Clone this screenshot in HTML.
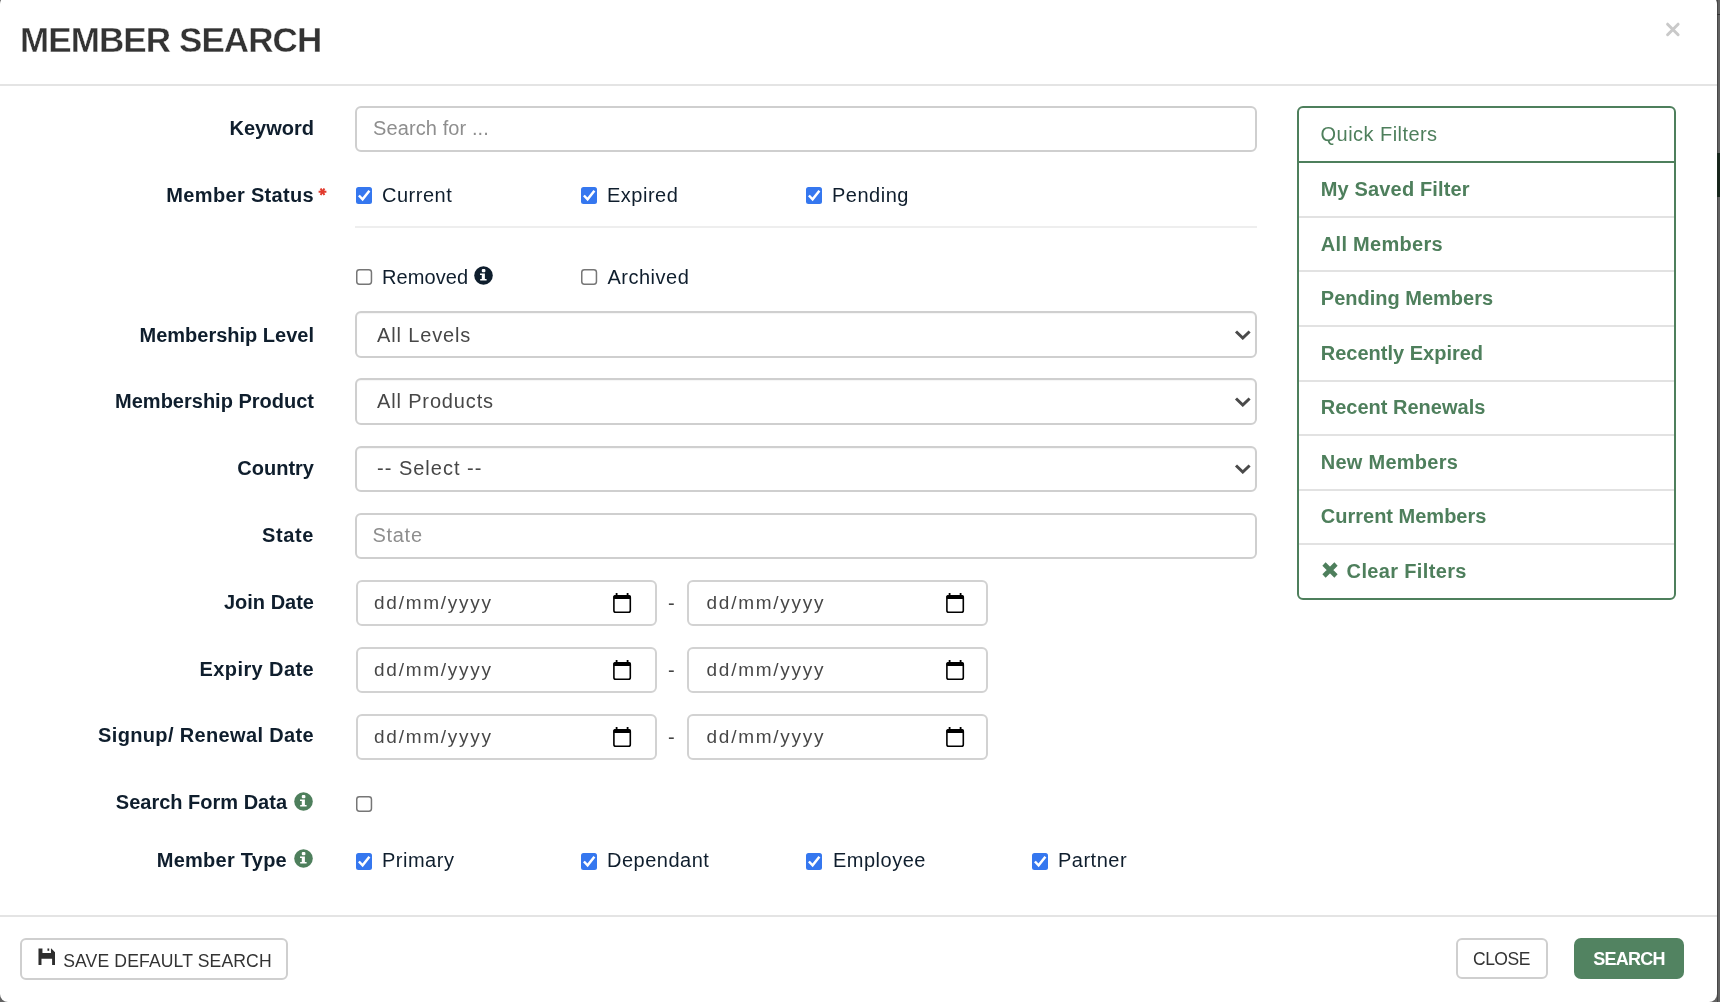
<!DOCTYPE html>
<html><head><meta charset="utf-8">
<style>
*{box-sizing:border-box;margin:0;padding:0}
html,body{width:1720px;height:1002px;overflow:hidden;background:#626262;font-family:"Liberation Sans",sans-serif}
.mbg{position:absolute;left:0;top:-4px;width:1717px;height:1006.4px;background:#fff;border-radius:8px}
.modal{position:absolute;left:0;top:0;width:1717px;height:1002px;will-change:transform}
.t{position:absolute;white-space:nowrap;line-height:normal}
.hline{position:absolute;left:0;width:1717px;height:2px;background:#e4e4e4}
.title{left:20px;top:20.3px;font-size:35px;font-weight:bold;color:#333;letter-spacing:-0.9px;-webkit-text-stroke:0.35px #fff;paint-order:fill stroke}
.lbl{font-size:20px;font-weight:bold;color:#0f1e2d;text-align:right}
.inp{position:absolute;left:355px;width:902px;height:46px;border:2px solid #cfcfcf;border-radius:6px;background:#fff}
.sel{position:absolute;left:355px;width:902px;height:47px;border:2px solid #cfcfcf;border-radius:6px;background:#fff;box-shadow:inset 0 1px 1px rgba(0,0,0,.04)}
.ph{font-size:20px;color:#8e8e8e;letter-spacing:0.1px}
.sv{font-size:20px;color:#474747;letter-spacing:0.85px}
.chev{position:absolute;left:1234px;width:18px;height:10px}
.cb{position:absolute;width:16.7px;height:16.6px;border-radius:2.5px}
.cb.on{background:#3577ef}
.cb.on svg{position:absolute;left:0;top:0}
.cb.off{background:none}
.ct{font-size:20px;color:#0f1e2d;letter-spacing:0.5px}
.date{position:absolute;width:301px;height:46px;border:2px solid #d2d2d2;border-radius:6px;background:#fff}
.dt{font-size:19px;color:#474747;letter-spacing:1.75px}
.cal{position:absolute;width:20px;height:22px}
.dash{font-size:20px;color:#444}
.qf{position:absolute;left:1297.4px;top:106.3px;width:379px;height:493.5px;border:2px solid #4e7f5c;border-radius:6px;overflow:hidden;background:#fff}
.qsep{position:absolute;left:0;width:100%;height:2px;background:#e2e2e2}
.qt{font-size:20px;color:#4e7f5c}
.qb{font-size:20px;font-weight:bold;color:#4e7f5c}
.btn{position:absolute;height:42px;border:2px solid #cfcfcf;border-radius:6px;background:#fff}
.bt{font-size:18px;color:#333}
.sbtn{position:absolute;left:1574px;top:938px;width:110px;height:41px;border-radius:7px;background:#528361}
</style></head><body>
<div style="position:absolute;left:1717px;top:0;width:1px;height:1002px;background:#474747"></div><div style="position:absolute;left:1717px;top:153px;width:3px;height:44px;background:#18261c"></div><div style="position:absolute;left:1717px;top:14px;width:3px;height:1px;background:#333"></div>
<div class="mbg"></div>
<div class="modal">
  <div class="t title">MEMBER SEARCH</div>
  <svg style="position:absolute;left:1665px;top:22px" width="16" height="16" viewBox="0 0 16 16"><path d="M2.6 2.2L13.1 12.7M13.1 2.2L2.6 12.7" stroke="#c9c9c9" stroke-width="3" stroke-linecap="round"/></svg>
  <div class="hline" style="top:83.5px"></div>

  <!-- Keyword -->
  <div class="t lbl" style="right:1403px;top:117.3px">Keyword</div>
  <div class="inp" style="top:106px"></div>
  <div class="t ph" style="left:373px;top:117px">Search for ...</div>

  <!-- Member status -->
  <div class="t lbl" style="right:1403px;top:183.9px;letter-spacing:0.33px">Member Status</div>
  <svg style="position:absolute;left:318.3px;top:187.8px" width="9" height="8" viewBox="0 0 9 8"><path d="M0.6 3.75H8.4M2.6 0.5L6.4 7M6.4 0.5L2.6 7" stroke="#e23b2e" stroke-width="2"/></svg>

  <div class="cb on" style="left:355.6px;top:187px"><svg width="17" height="17" viewBox="0 0 17 17"><path d="M2.9 8.5L6.6 12.3L13.4 3.7" fill="none" stroke="#fff" stroke-width="2.5"/></svg></div>
  <div class="t ct" style="left:382px;top:184px">Current</div>
  <div class="cb on" style="left:580.6px;top:187px"><svg width="17" height="17" viewBox="0 0 17 17"><path d="M2.9 8.5L6.6 12.3L13.4 3.7" fill="none" stroke="#fff" stroke-width="2.5"/></svg></div>
  <div class="t ct" style="left:607px;top:184px">Expired</div>
  <div class="cb on" style="left:805.6px;top:187px"><svg width="17" height="17" viewBox="0 0 17 17"><path d="M2.9 8.5L6.6 12.3L13.4 3.7" fill="none" stroke="#fff" stroke-width="2.5"/></svg></div>
  <div class="t ct" style="left:832px;top:184px">Pending</div>

  <div style="position:absolute;left:355px;top:226px;width:902px;height:2px;background:#eeeeee"></div>

  <div class="cb off" style="left:356px;top:269px"><svg width="17" height="17" viewBox="0 0 17 17"><rect x="0.75" y="0.75" width="14.7" height="14.4" rx="2.6" fill="#fff" stroke="#767676" stroke-width="1.5"/></svg></div>
  <div class="t ct" style="left:382px;top:265.9px;letter-spacing:0.08px">Removed</div>
  <svg style="position:absolute;left:474px;top:266px" width="19" height="19" viewBox="0 0 19 19"><circle cx="9.5" cy="9.5" r="9.3" fill="#0f1e2d"/><rect x="7.8" y="3" width="3.6" height="3.3" rx="1" fill="#fff"/><path d="M6 7.6H10.9V12.9H12.6V14.4H6.2V12.9H7.8V9.1H6Z" fill="#fff"/></svg>
  <div class="cb off" style="left:581px;top:269px"><svg width="17" height="17" viewBox="0 0 17 17"><rect x="0.75" y="0.75" width="14.7" height="14.4" rx="2.6" fill="#fff" stroke="#767676" stroke-width="1.5"/></svg></div>
  <div class="t ct" style="left:607.5px;top:265.9px">Archived</div>

  <!-- Selects -->
  <div class="t lbl" style="right:1403px;top:323.6px">Membership Level</div>
  <div class="sel" style="top:311px"></div>
  <div class="t sv" style="left:377px;top:323.8px">All Levels</div>
  <svg class="chev" style="top:330px" viewBox="0 0 18 10"><path d="M2 1.5L8.8 8L15.6 1.5" fill="none" stroke="#4a4a4a" stroke-width="3"/></svg>

  <div class="t lbl" style="right:1403px;top:390.4px">Membership Product</div>
  <div class="sel" style="top:378px"></div>
  <div class="t sv" style="left:377px;top:390.4px">All Products</div>
  <svg class="chev" style="top:396.5px" viewBox="0 0 18 10"><path d="M2 1.5L8.8 8L15.6 1.5" fill="none" stroke="#4a4a4a" stroke-width="3"/></svg>

  <div class="t lbl" style="right:1403px;top:457.4px">Country</div>
  <div class="sel" style="top:446px;height:46px"></div>
  <div class="t sv" style="left:377px;top:457px;letter-spacing:1.0px">-- Select --</div>
  <svg class="chev" style="top:464px" viewBox="0 0 18 10"><path d="M2 1.5L8.8 8L15.6 1.5" fill="none" stroke="#4a4a4a" stroke-width="3"/></svg>

  <div class="t lbl" style="right:1403px;top:524.1px;letter-spacing:0.6px">State</div>
  <div class="inp" style="top:513px;height:46px"></div>
  <div class="t ph" style="left:372.5px;top:524px;letter-spacing:0.7px">State</div>

  <!-- Dates -->
  <div class="t lbl" style="right:1403px;top:590.6px">Join Date</div>
  <div class="date" style="left:355.5px;top:580px"></div>
  <div class="t dt" style="left:374px;top:591.8px">dd/mm/yyyy</div>
  <svg class="cal" style="left:612px;top:592px" viewBox="0 0 20 22"><path d="M4.6 0.9V4M15.6 0.9V4" stroke="#000" stroke-width="1.8"/><rect x="1.9" y="3.8" width="16.4" height="16.4" rx="1.8" fill="none" stroke="#000" stroke-width="1.6"/><rect x="1.5" y="3.2" width="17.2" height="3.9" rx="1" fill="#000"/></svg>
  <div class="t dash" style="left:668px;top:592px">-</div>
  <div class="date" style="left:687px;top:580px"></div>
  <div class="t dt" style="left:706.5px;top:591.8px">dd/mm/yyyy</div>
  <svg class="cal" style="left:944.5px;top:592px" viewBox="0 0 20 22"><path d="M4.6 0.9V4M15.6 0.9V4" stroke="#000" stroke-width="1.8"/><rect x="1.9" y="3.8" width="16.4" height="16.4" rx="1.8" fill="none" stroke="#000" stroke-width="1.6"/><rect x="1.5" y="3.2" width="17.2" height="3.9" rx="1" fill="#000"/></svg>

  <div class="t lbl" style="right:1403px;top:657.6px;letter-spacing:0.4px">Expiry Date</div>
  <div class="date" style="left:355.5px;top:647px"></div>
  <div class="t dt" style="left:374px;top:658.8px">dd/mm/yyyy</div>
  <svg class="cal" style="left:612px;top:659px" viewBox="0 0 20 22"><path d="M4.6 0.9V4M15.6 0.9V4" stroke="#000" stroke-width="1.8"/><rect x="1.9" y="3.8" width="16.4" height="16.4" rx="1.8" fill="none" stroke="#000" stroke-width="1.6"/><rect x="1.5" y="3.2" width="17.2" height="3.9" rx="1" fill="#000"/></svg>
  <div class="t dash" style="left:668px;top:659px">-</div>
  <div class="date" style="left:687px;top:647px"></div>
  <div class="t dt" style="left:706.5px;top:658.8px">dd/mm/yyyy</div>
  <svg class="cal" style="left:944.5px;top:659px" viewBox="0 0 20 22"><path d="M4.6 0.9V4M15.6 0.9V4" stroke="#000" stroke-width="1.8"/><rect x="1.9" y="3.8" width="16.4" height="16.4" rx="1.8" fill="none" stroke="#000" stroke-width="1.6"/><rect x="1.5" y="3.2" width="17.2" height="3.9" rx="1" fill="#000"/></svg>

  <div class="t lbl" style="right:1403px;top:724.4px;letter-spacing:0.35px">Signup/ Renewal Date</div>
  <div class="date" style="left:355.5px;top:714px"></div>
  <div class="t dt" style="left:374px;top:725.8px">dd/mm/yyyy</div>
  <svg class="cal" style="left:612px;top:726px" viewBox="0 0 20 22"><path d="M4.6 0.9V4M15.6 0.9V4" stroke="#000" stroke-width="1.8"/><rect x="1.9" y="3.8" width="16.4" height="16.4" rx="1.8" fill="none" stroke="#000" stroke-width="1.6"/><rect x="1.5" y="3.2" width="17.2" height="3.9" rx="1" fill="#000"/></svg>
  <div class="t dash" style="left:668px;top:726px">-</div>
  <div class="date" style="left:687px;top:714px"></div>
  <div class="t dt" style="left:706.5px;top:725.8px">dd/mm/yyyy</div>
  <svg class="cal" style="left:944.5px;top:726px" viewBox="0 0 20 22"><path d="M4.6 0.9V4M15.6 0.9V4" stroke="#000" stroke-width="1.8"/><rect x="1.9" y="3.8" width="16.4" height="16.4" rx="1.8" fill="none" stroke="#000" stroke-width="1.6"/><rect x="1.5" y="3.2" width="17.2" height="3.9" rx="1" fill="#000"/></svg>

  <!-- Search form data -->
  <div class="t lbl" style="right:1430px;top:790.8px">Search Form Data</div>
  <svg style="position:absolute;left:294px;top:791.5px" width="19" height="19" viewBox="0 0 19 19"><circle cx="9.5" cy="9.5" r="9.3" fill="#4e7f5c"/><rect x="7.8" y="3" width="3.6" height="3.3" rx="1" fill="#fff"/><path d="M6 7.6H10.9V12.9H12.6V14.4H6.2V12.9H7.8V9.1H6Z" fill="#fff"/></svg>
  <div class="cb off" style="left:356.2px;top:796.1px"><svg width="17" height="17" viewBox="0 0 17 17"><rect x="0.75" y="0.75" width="14.7" height="14.4" rx="2.6" fill="#fff" stroke="#767676" stroke-width="1.5"/></svg></div>

  <!-- Member type -->
  <div class="t lbl" style="right:1430px;top:848.8px;letter-spacing:0.25px">Member Type</div>
  <svg style="position:absolute;left:294px;top:849px" width="19" height="19" viewBox="0 0 19 19"><circle cx="9.5" cy="9.5" r="9.3" fill="#4e7f5c"/><rect x="7.8" y="3" width="3.6" height="3.3" rx="1" fill="#fff"/><path d="M6 7.6H10.9V12.9H12.6V14.4H6.2V12.9H7.8V9.1H6Z" fill="#fff"/></svg>
  <div class="cb on" style="left:355.6px;top:853px"><svg width="17" height="17" viewBox="0 0 17 17"><path d="M2.9 8.5L6.6 12.3L13.4 3.7" fill="none" stroke="#fff" stroke-width="2.5"/></svg></div>
  <div class="t ct" style="left:382px;top:849px">Primary</div>
  <div class="cb on" style="left:580.6px;top:853px"><svg width="17" height="17" viewBox="0 0 17 17"><path d="M2.9 8.5L6.6 12.3L13.4 3.7" fill="none" stroke="#fff" stroke-width="2.5"/></svg></div>
  <div class="t ct" style="left:607px;top:849px">Dependant</div>
  <div class="cb on" style="left:805.6px;top:853px"><svg width="17" height="17" viewBox="0 0 17 17"><path d="M2.9 8.5L6.6 12.3L13.4 3.7" fill="none" stroke="#fff" stroke-width="2.5"/></svg></div>
  <div class="t ct" style="left:833px;top:849px">Employee</div>
  <div class="cb on" style="left:1031.6px;top:853px"><svg width="17" height="17" viewBox="0 0 17 17"><path d="M2.9 8.5L6.6 12.3L13.4 3.7" fill="none" stroke="#fff" stroke-width="2.5"/></svg></div>
  <div class="t ct" style="left:1058px;top:849px">Partner</div>

  <!-- Quick filters -->
  <div class="qf">
    <div style="position:absolute;left:0;top:52.7px;width:100%;height:2px;background:#4e7f5c"></div>
    <div class="qsep" style="top:107.5px"></div>
    <div class="qsep" style="top:162px"></div>
    <div class="qsep" style="top:216.7px"></div>
    <div class="qsep" style="top:271.3px"></div>
    <div class="qsep" style="top:325.8px"></div>
    <div class="qsep" style="top:380.4px"></div>
    <div class="qsep" style="top:435.2px"></div>
  </div>
  <div class="t qt" style="left:1320.6px;top:123.3px;letter-spacing:0.45px">Quick Filters</div>
  <div class="t qb" style="left:1320.8px;top:177.9px;letter-spacing:0.15px">My Saved Filter</div>
  <div class="t qb" style="left:1320.8px;top:232.5px;letter-spacing:0.3px">All Members</div>
  <div class="t qb" style="left:1320.8px;top:286.8px">Pending Members</div>
  <div class="t qb" style="left:1320.8px;top:341.6px">Recently Expired</div>
  <div class="t qb" style="left:1320.8px;top:396.4px">Recent Renewals</div>
  <div class="t qb" style="left:1320.8px;top:451.1px;letter-spacing:0.25px">New Members</div>
  <div class="t qb" style="left:1320.8px;top:504.9px">Current Members</div>
  <svg style="position:absolute;left:1321px;top:561px" width="18" height="18" viewBox="0 0 18 18"><path d="M3 3L15 15M15 3L3 15" stroke="#4e7f5c" stroke-width="4.6"/></svg>
  <div class="t qb" style="left:1346.6px;top:559.9px;letter-spacing:0.35px">Clear Filters</div>

  <div class="hline" style="top:915px"></div>

  <div class="btn" style="left:20px;top:938px;width:268px"></div>
  <svg style="position:absolute;left:37.6px;top:947.8px" width="17.4" height="17.4" viewBox="0 0 18 18"><path d="M0.5 0.5H13.8L17.7 4.4V17.7H14.6V11.2H3.6V17.7H0.5Z M4.6 0.5V5.3H13.4V0.5Z" fill="#2e2e2e" fill-rule="evenodd"/><rect x="9.8" y="0.5" width="1.8" height="2.4" fill="#2e2e2e"/></svg>
  <div class="t bt" style="left:63.2px;top:950.9px;font-size:17.6px;letter-spacing:0.12px">SAVE DEFAULT SEARCH</div>

  <div class="btn" style="left:1456px;top:938px;width:92px;height:41px"></div>
  <div class="t bt" style="left:1473px;top:948.5px;font-size:17.5px;letter-spacing:-0.5px">CLOSE</div>
  <div class="sbtn"></div>
  <div class="t bt" style="left:1593.2px;top:949px;font-size:18px;font-weight:bold;color:#fff;letter-spacing:-0.75px">SEARCH</div>
</div>
</body></html>
